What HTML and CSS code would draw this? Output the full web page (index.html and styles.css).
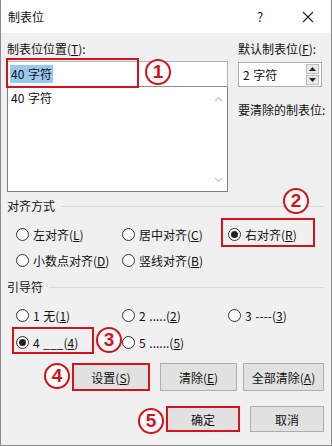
FILE: index.html
```html
<!DOCTYPE html>
<html lang="zh">
<head>
<meta charset="utf-8">
<link rel="stylesheet" href="styles.css">
</head>
<body>
<div class="win">
  <div class="titlebar">
    <span class="title">制表位</span>
    <span class="help">?</span>
    <svg class="close" width="12" height="12" viewBox="0 0 12 12"><path d="M1 1L11 11M11 1L1 11" stroke="#222" stroke-width="1.1" fill="none"/></svg>
  </div>
  <div class="body">
    <div class="top">
      <div class="left">
        <div class="lbl">制表位位置(<u>T</u>):</div>
        <div class="input"><span class="sel">40 字符</span></div>
        <div class="list">
          <div class="items"><div class="item">40 字符</div></div>
          <div class="sb">
            <svg width="9" height="6" viewBox="0 0 9 6"><path d="M1 5L4.5 1.5L8 5" stroke="#c4c4c4" stroke-width="1.2" fill="none"/></svg>
            <svg width="9" height="6" viewBox="0 0 9 6"><path d="M1 1L4.5 4.5L8 1" stroke="#c4c4c4" stroke-width="1.2" fill="none"/></svg>
          </div>
        </div>
      </div>
      <div class="right">
        <div class="lbl">默认制表位(<u>F</u>):</div>
        <div class="spin">
          <span class="spinval">2 字符</span>
          <div class="spinbtns">
            <div class="sbtn"><svg width="7" height="4" viewBox="0 0 7 4"><path d="M0 4L3.5 0L7 4Z" fill="#222"/></svg></div>
            <div class="sbtn"><svg width="7" height="4" viewBox="0 0 7 4"><path d="M0 0L3.5 4L7 0Z" fill="#222"/></svg></div>
          </div>
        </div>
        <div class="lbl clearlbl">要清除的制表位:</div>
      </div>
    </div>

    <div class="group-title g1"><span>对齐方式</span><i class="rule"></i></div>
    <div class="radios r1">
      <label class="radio"><span class="dot"></span>左对齐(<u>L</u>)</label>
      <label class="radio"><span class="dot"></span>居中对齐(<u>C</u>)</label>
      <label class="radio"><span class="dot on"></span>右对齐(<u>R</u>)</label>
      <label class="radio"><span class="dot"></span>小数点对齐(<u>D</u>)</label>
      <label class="radio"><span class="dot"></span>竖线对齐(<u>B</u>)</label>
    </div>

    <div class="group-title g2"><span>引导符</span><i class="rule"></i></div>
    <div class="radios r2">
      <label class="radio"><span class="dot"></span>1 无(<u>1</u>)</label>
      <label class="radio"><span class="dot"></span>2 .....(<u>2</u>)</label>
      <label class="radio"><span class="dot"></span>3 ----(<u>3</u>)</label>
      <label class="radio"><span class="dot on"></span>4 ___(<u>4</u>)</label>
      <label class="radio"><span class="dot"></span>5 ......(<u>5</u>)</label>
    </div>

    <div class="btnrow row1">
      <button class="btn b-set marked">设置(<u>S</u>)</button>
      <button class="btn b-clr">清除(<u>E</u>)</button>
      <button class="btn b-all">全部清除(<u>A</u>)</button>
    </div>
    <div class="btnrow row2">
      <button class="btn b-ok marked">确定</button>
      <button class="btn b-cancel">取消</button>
    </div>
  </div>

  <div class="box box1"></div>
  <div class="box box2"></div>
  <div class="box box3"></div>
  <div class="num n1">1</div>
  <div class="num n2">2</div>
  <div class="num n3">3</div>
  <div class="num n4">4</div>
  <div class="num n5">5</div>
</div>
</body>
</html>
```

FILE: styles.css
```css
* { box-sizing: border-box; }
html, body { margin: 0; padding: 0; }
body {
  width: 332px;
  height: 446px;
  overflow: hidden;
  font-family: "Noto Sans CJK SC", "Microsoft YaHei", sans-serif;
  font-size: 12px;
  color: #111;
  background: #f0f0f0;
  word-spacing: 1px;
}
u { text-decoration: underline; text-underline-offset: 1px; }

.win {
  position: relative;
  width: 332px;
  height: 446px;
  border: 1px solid #8a8a8a;
  border-top: none;
  background: #f0f0f0;
}

.titlebar {
  height: 33px;
  background: #fff;
  display: flex;
  align-items: center;
  padding-left: 7px;
}
.title { font-size: 12px; line-height: 16px; flex: 1; }
.help { font-size: 13px; width: 12px; margin-right: 33px; color: #222; }
.close { margin-right: 17px; }

.body { padding: 0 7px 0 6px; }

.top { display: flex; padding-top: 8px; }
.left { width: 221px; }
.right { width: 84px; margin-left: 10px; }
.lbl { line-height: 16px; height: 16px; white-space: nowrap; }

.input {
  margin-top: 4px;
  height: 26px;
  background: #fff;
  border: 1px solid #b4b4b4;
  border-bottom: 1px solid #8c8c8c;
  padding: 3px 0 0 2px;
}
.sel { background: #99c9ef; line-height: 18px; display: inline-block; padding: 0 1px; }

.list {
  height: 105px;
  background: #fff;
  border: 1px solid #828282;
  border-top: none;
  display: flex;
}
.items { flex: 1; padding: 3px 0 0 3px; line-height: 16px; }
.sb {
  width: 17px;
  display: flex;
  flex-direction: column;
  justify-content: space-between;
  align-items: center;
  padding: 9px 0 8px;
}

.spin {
  margin-top: 5px;
  height: 25px;
  background: #fff;
  border: 1px solid #adadad;
  display: flex;
  align-items: center;
  padding-left: 4px;
}
.spinval { flex: 1; }
.spinbtns { width: 13px; margin-right: 2px; display: flex; flex-direction: column; gap: 1px; }
.sbtn {
  height: 10px;
  background: #e8e8e8;
  border: 1px solid #bcbcbc;
  display: flex;
  align-items: center;
  justify-content: center;
}
.clearlbl { margin-top: 15px; }

.group-title { display: flex; align-items: center; line-height: 16px; height: 16px; }
.group-title .rule { flex: 1; height: 1px; background: #d8d8d8; margin-left: 6px; margin-right: 0; }
.g1 { margin-top: 6px; }
.g2 { margin-top: 6px; }

.radios {
  display: grid;
  grid-template-columns: 106px 106px 96px;
  padding-left: 9px;
}
.r1 { margin-top: 7px; grid-auto-rows: 26px; }
.r2 { margin-top: 7px; grid-auto-rows: 27px; }
.radio { display: flex; align-items: center; white-space: nowrap; }
.dot {
  width: 13px;
  height: 13px;
  border-radius: 50%;
  border: 1px solid #333;
  background: #fff;
  margin-right: 4px;
  display: flex;
  align-items: center;
  justify-content: center;
  flex: none;
}
.dot.on::after {
  content: "";
  width: 7px;
  height: 7px;
  border-radius: 50%;
  background: #222;
}

.btnrow { display: flex; justify-content: flex-end; }
.row1 { margin-top: 7px; height: 28px; }
.row2 { margin-top: 15px; height: 26px; }
.btn {
  font: inherit;
  color: #111;
  background: #e1e1e1;
  border: 1px solid #adadad;
  padding: 0;
  height: 100%;
}
.b-set { width: 78px; }
.b-clr { width: 77px; margin-left: 10px; }
.b-all { width: 81px; margin-left: 6px; }
.b-ok { width: 74px; }
.b-cancel { width: 74px; margin-left: 10px; }
.btn.marked { border: 2px solid #d3131b; }

.box {
  position: absolute;
  border: 2px solid #d3131b;
}
.box1 { left: 5px; top: 58px; width: 133px; height: 30px; }
.box2 { left: 220px; top: 218px; width: 94px; height: 29px; }
.box3 { left: 11px; top: 327px; width: 82px; height: 27px; }

.num {
  position: absolute;
  width: 26px;
  height: 26px;
  border-radius: 50%;
  border: 2.5px solid #d3131b;
  background: #fff;
  color: #d3131b;
  font-family: "Liberation Sans", Arial, sans-serif;
  font-weight: bold;
  font-size: 19px;
  line-height: 21px;
  text-align: center;
}
.n1 { left: 144px; top: 59px; }
.n2 { left: 282px; top: 188px; }
.n3 { left: 95px; top: 327px; }
.n4 { left: 43px; top: 363px; }
.n5 { left: 137px; top: 408px; }
```
